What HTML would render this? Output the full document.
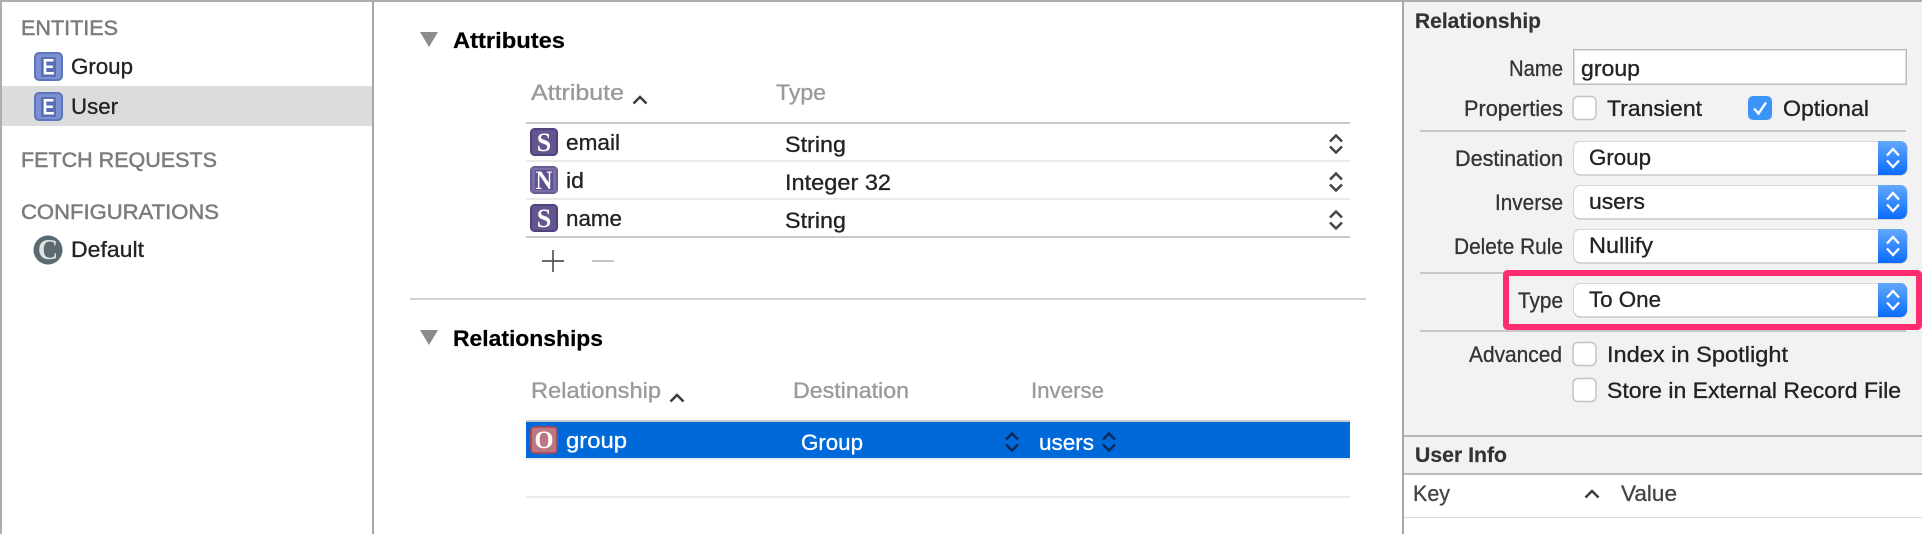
<!DOCTYPE html>
<html><head><meta charset="utf-8"><title>Relationship</title>
<style>
html,body{margin:0;padding:0;background:#fff;width:1922px;height:534px;overflow:hidden}
svg{display:block}
text{font-family:"Liberation Sans",sans-serif;font-size:22px;fill:#222;stroke:#222;stroke-width:.3px}
.sec{font-size:21px;fill:#7c7c7c;stroke:#7c7c7c;stroke-width:.5px}
.b{font-weight:700;fill:#000;stroke:#000;stroke-width:.2px}
.pb{font-weight:700;fill:#333;stroke:#333;stroke-width:.2px;font-size:21px}
.hd{fill:#9a9a9a;stroke:#9a9a9a;stroke-width:.35px}
.lb{fill:#333;stroke:#333}
.w{fill:#fff;stroke:#fff}
.ic{font-family:"Liberation Serif",serif;font-weight:700;fill:#fff;stroke:none;text-anchor:middle}
.ia{font-family:"Liberation Sans",sans-serif;font-weight:700;fill:#fff;stroke:none}
</style></head><body>
<svg width="1922" height="534" viewBox="0 0 1922 534" xmlns="http://www.w3.org/2000/svg">
<defs>
<linearGradient id="bl" x1="0" y1="0" x2="0" y2="1"><stop offset="0" stop-color="#62a9fb"/><stop offset="1" stop-color="#0a6bfd"/></linearGradient>
<path id="st" d="M-6 -2.5L0 -8.5L6 -2.5M-6 2.5L0 8.5L6 2.5" fill="none" stroke-width="2.5"/>
<path id="car" d="M-6.5 3.5L0 -3L6.5 3.5" fill="none" stroke="#3c3c3c" stroke-width="2.5"/>
<g id="pop">
<rect x="1573.5" y="0" width="334" height="34.5" rx="7" fill="#b2b2b2"/>
<rect x="1574" y="0.5" width="333" height="33" rx="6.5" fill="#fff"/>
<path d="M1878 0H1900a7 7 0 0 1 7 7V27a7 7 0 0 1 -7 7H1878Z" fill="url(#bl)"/>
<path d="M1887 14.5L1893 8L1899 14.5M1887 19.5L1893 26L1899 19.5" fill="none" stroke="#fff" stroke-width="2.3"/>
</g>
<g id="cb"><rect x="1573" y="0.5" width="23" height="23" rx="5" fill="#fff" stroke="#c4c4c4" stroke-width="1.5"/></g>
<g id="ent"><rect x="35" y="0" width="27" height="27" rx="4" fill="#7b90ce" stroke="#5e74bc" stroke-width="2"/><rect x="41" y="4" width="15" height="20" fill="#5a6fb5"/></g>
</defs>

<!-- outer borders -->
<rect width="1922" height="2" fill="#adadad"/>
<rect y="0" width="2" height="534" fill="#adadad"/>
<rect x="372" y="0" width="2" height="534" fill="#a8a8a8"/>

<!-- sidebar -->
<rect x="2" y="86" width="370" height="40" fill="#dcdcdc"/>
<text class="sec" x="21" y="35" textLength="97" lengthAdjust="spacingAndGlyphs">ENTITIES</text>
<use href="#ent" y="53"/><text class="ia" x="42.5" y="74.5" style="font-size:22px" textLength="12" lengthAdjust="spacingAndGlyphs">E</text>
<text x="71" y="74" textLength="62" lengthAdjust="spacingAndGlyphs">Group</text>
<use href="#ent" y="93"/><text class="ia" x="42.5" y="114.5" style="font-size:22px" textLength="12" lengthAdjust="spacingAndGlyphs">E</text>
<text x="71" y="114" textLength="47" lengthAdjust="spacingAndGlyphs">User</text>
<text class="sec" x="21" y="167" textLength="196" lengthAdjust="spacingAndGlyphs">FETCH REQUESTS</text>
<text class="sec" x="21" y="219" textLength="198" lengthAdjust="spacingAndGlyphs">CONFIGURATIONS</text>
<circle cx="48" cy="250" r="14.5" fill="#5b6a70"/>
<text class="ic" x="48" y="259" style="font-size:28px;fill:#dfe3e3">C</text>
<text x="71" y="257" textLength="73" lengthAdjust="spacingAndGlyphs">Default</text>

<!-- attributes -->
<path d="M420 32H438L429 47Z" fill="#8c8c8c"/>
<text class="b" x="453" y="48" textLength="112" lengthAdjust="spacingAndGlyphs">Attributes</text>
<text class="hd" x="531" y="100" textLength="93" lengthAdjust="spacingAndGlyphs">Attribute</text>
<use href="#car" x="640" y="100"/>
<text class="hd" x="776" y="100" textLength="50" lengthAdjust="spacingAndGlyphs">Type</text>
<rect x="526" y="122" width="824" height="2" fill="#c8c8c8"/>
<rect x="526" y="160" width="824" height="2" fill="#ebebeb"/>
<rect x="526" y="198" width="824" height="2" fill="#ebebeb"/>
<rect x="526" y="236" width="824" height="2" fill="#c8c8c8"/>

<rect x="531" y="129" width="26" height="26" rx="3.5" fill="#63568f" stroke="#4f437e" stroke-width="2"/>
<text class="ic" x="544" y="151" style="font-size:26px">S</text>
<rect x="531" y="167" width="26" height="26" rx="3.5" fill="#7c6ea6" stroke="#6a5c96" stroke-width="2"/>
<rect x="535" y="170" width="18" height="20" fill="#5d5090"/>
<text class="ic" x="535.5" y="189" style="font-size:26px;text-anchor:start" textLength="17" lengthAdjust="spacingAndGlyphs">N</text>
<rect x="531" y="205" width="26" height="26" rx="3.5" fill="#63568f" stroke="#4f437e" stroke-width="2"/>
<text class="ic" x="544" y="227" style="font-size:26px">S</text>

<text x="566" y="150" textLength="54" lengthAdjust="spacingAndGlyphs">email</text>
<text x="566" y="188" textLength="18" lengthAdjust="spacingAndGlyphs">id</text>
<text x="566" y="226" textLength="56" lengthAdjust="spacingAndGlyphs">name</text>
<text x="785" y="152" textLength="61" lengthAdjust="spacingAndGlyphs">String</text>
<text x="785" y="190" textLength="106" lengthAdjust="spacingAndGlyphs">Integer 32</text>
<text x="785" y="228" textLength="61" lengthAdjust="spacingAndGlyphs">String</text>
<use href="#st" x="1336" y="144" stroke="#444"/>
<use href="#st" x="1336" y="182" stroke="#444"/>
<use href="#st" x="1336" y="220" stroke="#444"/>
<path d="M542 261H564M553 250V272" stroke="#555" stroke-width="1.7" fill="none"/>
<rect x="592" y="260" width="22" height="2" fill="#c4c4c4"/>

<rect x="410" y="298" width="956" height="2" fill="#d2d2d2"/>

<!-- relationships -->
<path d="M420 330H438L429 345Z" fill="#8c8c8c"/>
<text class="b" x="453" y="346" textLength="150" lengthAdjust="spacingAndGlyphs">Relationships</text>
<text class="hd" x="531" y="398" textLength="130" lengthAdjust="spacingAndGlyphs">Relationship</text>
<use href="#car" x="677" y="398"/>
<text class="hd" x="793" y="398" textLength="116" lengthAdjust="spacingAndGlyphs">Destination</text>
<text class="hd" x="1031" y="398" textLength="73" lengthAdjust="spacingAndGlyphs">Inverse</text>
<rect x="526" y="420" width="824" height="2" fill="#c8c8c8"/>
<rect x="526" y="422" width="824" height="36" fill="#0069d9"/>
<rect x="526" y="458" width="824" height="2" fill="#ebebeb"/>
<rect x="526" y="496" width="824" height="2" fill="#ebebeb"/>
<rect x="531" y="427" width="26" height="26" rx="3.5" fill="#bf7680" stroke="#a04f5c" stroke-width="2"/>
<text class="ic" x="534.5" y="448" style="font-size:25px;text-anchor:start" textLength="19" lengthAdjust="spacingAndGlyphs">O</text>
<text class="w" x="566" y="448" textLength="61" lengthAdjust="spacingAndGlyphs">group</text>
<text class="w" x="801" y="450" textLength="62" lengthAdjust="spacingAndGlyphs">Group</text>
<use href="#st" x="1012" y="442" stroke="#0c2a58"/>
<text class="w" x="1039" y="450" textLength="55" lengthAdjust="spacingAndGlyphs">users</text>
<use href="#st" x="1109" y="442" stroke="#0c2a58"/>

<!-- inspector -->
<rect x="1402" y="0" width="2" height="534" fill="#a8a8a8"/>
<rect x="1404" y="2" width="518" height="532" fill="#f2f2f2"/>
<text class="pb" x="1415" y="28" textLength="126" lengthAdjust="spacingAndGlyphs">Relationship</text>

<text class="lb" x="1509" y="76" textLength="54" lengthAdjust="spacingAndGlyphs">Name</text>
<rect x="1573.75" y="49.75" width="332.5" height="34.5" fill="#fff" stroke="#bcbcbc" stroke-width="1.5"/>
<text x="1581" y="76" textLength="59" lengthAdjust="spacingAndGlyphs">group</text>

<text class="lb" x="1464" y="116" textLength="99" lengthAdjust="spacingAndGlyphs">Properties</text>
<use href="#cb" y="96"/>
<text x="1607" y="116" textLength="95" lengthAdjust="spacingAndGlyphs">Transient</text>
<rect x="1748" y="96" width="24" height="24" rx="5" fill="#3d94f8"/>
<path d="M1754 108.5L1758.5 113.5L1766 102.5" fill="none" stroke="#fff" stroke-width="2.4"/>
<text x="1783" y="116" textLength="86" lengthAdjust="spacingAndGlyphs">Optional</text>
<rect x="1420" y="130" width="486" height="2" fill="#c8c8c8"/>

<text class="lb" x="1455" y="166" textLength="108" lengthAdjust="spacingAndGlyphs">Destination</text>
<use href="#pop" y="141"/>
<text x="1589" y="165" textLength="62" lengthAdjust="spacingAndGlyphs">Group</text>

<text class="lb" x="1495" y="210" textLength="68" lengthAdjust="spacingAndGlyphs">Inverse</text>
<use href="#pop" y="185"/>
<text x="1589" y="209" textLength="56" lengthAdjust="spacingAndGlyphs">users</text>

<text class="lb" x="1454" y="254" textLength="109" lengthAdjust="spacingAndGlyphs">Delete Rule</text>
<use href="#pop" y="229"/>
<text x="1589" y="253" textLength="64" lengthAdjust="spacingAndGlyphs">Nullify</text>

<rect x="1420" y="272" width="486" height="2" fill="#c8c8c8"/>
<rect x="1420" y="330" width="486" height="2" fill="#c8c8c8"/>

<text class="lb" x="1518" y="308" textLength="45" lengthAdjust="spacingAndGlyphs">Type</text>
<use href="#pop" y="283"/>
<text x="1589" y="307" textLength="72" lengthAdjust="spacingAndGlyphs">To One</text>
<rect x="1506" y="273" width="413" height="54" rx="1.5" fill="none" stroke="#ff2d6f" stroke-width="6"/>

<text class="lb" x="1469" y="362" textLength="93" lengthAdjust="spacingAndGlyphs">Advanced</text>
<use href="#cb" y="342"/>
<text x="1607" y="362" textLength="181" lengthAdjust="spacingAndGlyphs">Index in Spotlight</text>
<use href="#cb" y="378"/>
<text x="1607" y="398" textLength="294" lengthAdjust="spacingAndGlyphs">Store in External Record File</text>

<rect x="1404" y="435" width="518" height="2" fill="#b6b6b6"/>
<text class="pb" x="1415" y="462" textLength="92" lengthAdjust="spacingAndGlyphs">User Info</text>
<rect x="1404" y="473" width="518" height="2" fill="#bcbcbc"/>
<rect x="1404" y="475" width="518" height="59" fill="#fff"/>
<text class="lb" x="1413" y="501" textLength="37" lengthAdjust="spacingAndGlyphs" style="fill:#444;stroke:#444">Key</text>
<use href="#car" x="1592" y="494"/>
<text class="lb" x="1621" y="501" textLength="56" lengthAdjust="spacingAndGlyphs" style="fill:#444;stroke:#444">Value</text>
<rect x="1404" y="517" width="518" height="1" fill="#dcdcdc"/>
</svg>
</body></html>
